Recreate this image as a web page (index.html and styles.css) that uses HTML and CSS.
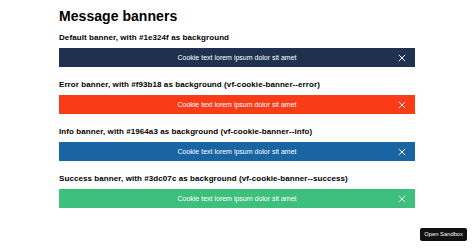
FILE: index.html
```html
<!DOCTYPE html>
<html lang="en">
<head>
<meta charset="utf-8">
<title>Message banners</title>
<link rel="stylesheet" href="styles.css">
</head>
<body>
<main class="page">
  <h1 class="title">Message banners</h1>

  <section class="demo">
    <h2 class="demo-heading">Default banner, with #1e324f as background</h2>
    <div class="banner banner--default">
      <p class="banner-text">Cookie text lorem ipsum dolor sit amet</p>
      <button class="banner-close" aria-label="Close"><svg viewBox="0 0 10 10"><path d="M1 1L9 9M9 1L1 9"/></svg></button>
    </div>
  </section>

  <section class="demo">
    <h2 class="demo-heading">Error banner, with #f93b18 as background (vf-cookie-banner--error)</h2>
    <div class="banner banner--error">
      <p class="banner-text">Cookie text lorem ipsum dolor sit amet</p>
      <button class="banner-close" aria-label="Close"><svg viewBox="0 0 10 10"><path d="M1 1L9 9M9 1L1 9"/></svg></button>
    </div>
  </section>

  <section class="demo">
    <h2 class="demo-heading">Info banner, with #1964a3 as background (vf-cookie-banner--info)</h2>
    <div class="banner banner--info">
      <p class="banner-text">Cookie text lorem ipsum dolor sit amet</p>
      <button class="banner-close" aria-label="Close"><svg viewBox="0 0 10 10"><path d="M1 1L9 9M9 1L1 9"/></svg></button>
    </div>
  </section>

  <section class="demo">
    <h2 class="demo-heading">Success banner, with #3dc07c as background (vf-cookie-banner--success)</h2>
    <div class="banner banner--success">
      <p class="banner-text">Cookie text lorem ipsum dolor sit amet</p>
      <button class="banner-close" aria-label="Close"><svg viewBox="0 0 10 10"><path d="M1 1L9 9M9 1L1 9"/></svg></button>
    </div>
  </section>
</main>
<a class="sandbox-btn" href="#">Open Sandbox</a>
</body>
</html>
```

FILE: styles.css
```css
html, body {
  margin: 0;
  padding: 0;
  background: #ffffff;
}

body {
  font-family: "Liberation Sans", Arial, sans-serif;
  color: #000000;
}

.page {
  padding: 8px 59px 0;
}

.title {
  margin: 0 0 8.5px;
  font-size: 14px;
  line-height: 16px;
  font-weight: 700;
  letter-spacing: 0.05px;
}

.demo {
  margin: 0 0 12.5px;
}

.demo-heading {
  margin: 0 0 5.5px;
  font-size: 8px;
  line-height: 10px;
  font-weight: 700;
  letter-spacing: 0.08px;
}

.banner {
  position: relative;
  display: flex;
  align-items: center;
  justify-content: center;
  height: 19px;
  color: #ffffff;
}

.banner--default { background: #1e324f; }
.banner--error { background: #f93b18; }
.banner--info { background: #1964a3; }
.banner--success { background: #3dc07c; }

.banner-text {
  margin: 0;
  font-size: 7px;
  line-height: 9px;
}

.banner-close {
  position: absolute;
  right: 9px;
  top: 50%;
  transform: translateY(-50%);
  width: 8px;
  height: 8px;
  padding: 0;
  border: 0;
  background: transparent;
  display: flex;
}

.banner-close svg {
  width: 8px;
  height: 8px;
  stroke: #ffffff;
  stroke-width: 1.2;
  fill: none;
}

.sandbox-btn {
  position: fixed;
  right: 7px;
  bottom: 7px;
  padding: 0 4px;
  height: 13px;
  line-height: 13px;
  background: #111111;
  color: #ffffff;
  border-radius: 2px;
  font-size: 5.8px;
  text-decoration: none;
}
```
